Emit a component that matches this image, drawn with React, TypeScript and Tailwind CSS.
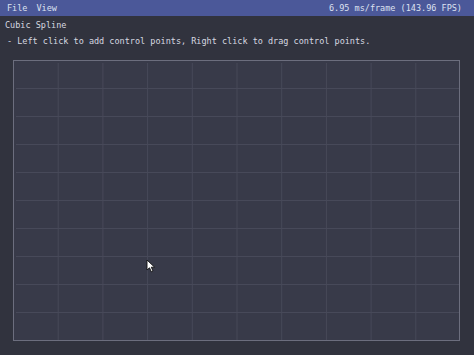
import React from 'react';

const mono = { fontFamily: '"DejaVu Sans Mono", "Liberation Mono", monospace' };

const cols = Array.from({ length: 9 }, (_, i) => i + 1);
const rows = Array.from({ length: 9 }, (_, i) => i + 1);

function Cursor() {
  return (
    <svg
      className="absolute left-[146px] top-[259px]"
      width="10"
      height="14"
      viewBox="0 0 10 14"
    >
      <path
        d="M1 1 L1 11 L3.5 8.8 L5.3 12.8 L7 12 L5.3 8.2 L8.6 8.2 Z"
        fill="#ffffff"
        stroke="#111111"
        strokeWidth="0.9"
        strokeLinejoin="round"
      />
    </svg>
  );
}

export default function App() {
  return (
    <div
      className="relative w-[474px] h-[355px] overflow-hidden bg-[#31333e] text-[8.5px] leading-none text-[#d6d8e0]"
      style={mono}
    >
      {/* Menu bar */}
      <div className="h-[16px] bg-[#4b5899] flex items-center justify-between pl-[7px] pr-[12px] text-[#dde1f0]">
        <div className="flex gap-[9px]">
          <span>File</span>
          <span>View</span>
        </div>
        <span>6.95 ms/frame (143.96 FPS)</span>
      </div>

      {/* Content */}
      <div className="pt-[5px] pl-[5px]">
        <div className="h-[8px]">Cubic Spline</div>
        <div className="mt-[8px] pl-[2px] h-[8px]">
          - Left click to add control points, Right click to drag control points.
        </div>
      </div>

      {/* Canvas */}
      <div className="ml-[13px] mt-[15px] w-[447px] h-[281px] border border-[#6c6e7e] bg-[#383a49]">
        <svg width="445" height="279" className="block">
          {cols.map((c) => (
            <line
              key={'v' + c}
              x1={c * 44.7 - 0.5}
              x2={c * 44.7 - 0.5}
              y1={2}
              y2={279}
              stroke="#474959"
              strokeWidth="1"
            />
          ))}
          {rows.map((r) => (
            <line
              key={'h' + r}
              x1={2}
              x2={445}
              y1={r * 28 - 0.5}
              y2={r * 28 - 0.5}
              stroke="#474959"
              strokeWidth="1"
            />
          ))}
        </svg>
      </div>

      <Cursor />
    </div>
  );
}
